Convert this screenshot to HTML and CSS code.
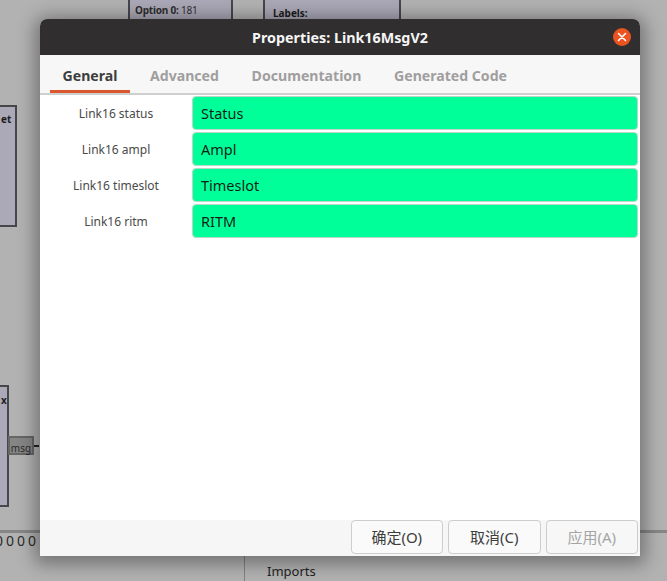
FILE: index.html
```html
<!DOCTYPE html>
<html lang="en">
<head>
<meta charset="utf-8">
<title>Properties: Link16MsgV2</title>
<link rel="stylesheet" href="styles.css">
</head>
<body>
<div class="canvas">
  <div class="node node-a"><span class="opt"><b>Option 0:</b> 181</span></div>
  <div class="node node-b"><b>Labels:</b></div>
  <div class="node node-c"><b>et</b></div>
  <div class="node node-d"><b>x</b></div>
  <div class="port">msg</div>
  <div class="wire"></div>
  <div class="hline"></div>
  <div class="ruler">0000</div>
  <div class="vline"></div>
  <div class="imports">Imports</div>
</div>
<div class="dialog">
  <header class="titlebar">
    <span class="title">Properties: Link16MsgV2</span>
    <span class="close"><svg viewBox="0 0 18 18" width="18" height="18"><path d="M5.5 5.5l7 7M12.5 5.5l-7 7" stroke="#fff" stroke-width="1.6" stroke-linecap="round" fill="none"/></svg></span>
  </header>
  <nav class="tabs">
    <span class="tab active">General</span>
    <span class="tab">Advanced</span>
    <span class="tab">Documentation</span>
    <span class="tab">Generated Code</span>
  </nav>
  <main class="form">
    <div class="row"><label class="label">Link16 status</label><div class="field">Status</div></div>
    <div class="row"><label class="label">Link16 ampl</label><div class="field">Ampl</div></div>
    <div class="row"><label class="label">Link16 timeslot</label><div class="field">Timeslot</div></div>
    <div class="row"><label class="label">Link16 ritm</label><div class="field">RITM</div></div>
  </main>
  <footer class="footer">
    <button class="btn">确定(O)</button>
    <button class="btn">取消(C)</button>
    <button class="btn disabled">应用(A)</button>
  </footer>
</div>
</body>
</html>
```
FILE: styles.css
```css
* { box-sizing: border-box; }
html, body { margin: 0; height: 100%; }
body {
  width: 667px;
  height: 581px;
  overflow: hidden;
  position: relative;
  background: #b2b2b2;
  font-family: "Noto Sans", "Noto Sans CJK SC", sans-serif;
}
.canvas { position: absolute; inset: 0; overflow: hidden; }
.node {
  position: absolute;
  background: #aba8b7;
  border: 2px solid #47474b;
  font-size: 10px;
  color: #1c1c1c;
}
.node b { font-weight: 700; }
.node-a { left: 128px; top: -10px; width: 105px; height: 40px; padding: 11px 0 0 5px; }
.node-a .opt { color: #2e2e2e; letter-spacing: -0.2px; }
.node-b { left: 263px; top: -10px; width: 138px; height: 40px; padding: 14px 0 0 8px; }
.node-c { left: -10px; top: 105px; width: 27px; height: 122px; padding: 5px 0 0 9px; }
.node-d { left: -10px; top: 385px; width: 19px; height: 122px; padding: 6px 0 0 9px; }
.port {
  position: absolute;
  left: 8px; top: 436px;
  width: 26px; height: 19px;
  background: #858585;
  border: 2px solid #666;
  font-size: 10px;
  line-height: 21px;
  text-align: center;
  color: #2a2a2a;
}
.wire { position: absolute; left: 34px; top: 445px; width: 5px; height: 2px; background: #222; }
.hline { position: absolute; left: 0; right: 0; top: 530px; height: 3px; background: #868686; }
.ruler {
  position: absolute;
  left: -5px; top: 533px;
  font-size: 14px;
  line-height: 16px;
  letter-spacing: 3px;
  color: #2a2a2a;
}
.vline { position: absolute; left: 244px; top: 556px; bottom: 0; width: 1px; background: #808080; }
.imports { position: absolute; left: 267px; top: 561.5px; font-size: 13px; line-height: 18px; color: #1e1e1e; }

.dialog {
  position: absolute;
  left: 40px; top: 19px;
  width: 600px; height: 537px;
  display: flex;
  flex-direction: column;
  background: #fff;
  border-radius: 7px 7px 0 0;
  box-shadow: 0 3px 18px 5px rgba(0,0,0,.36);
  overflow: hidden;
}
.titlebar {
  flex: 0 0 36px;
  display: flex;
  align-items: center;
  justify-content: center;
  position: relative;
  background: #302e2e;
  color: #f5f5f5;
  font-size: 14.3px;
  font-weight: 700;
}
.close {
  position: absolute;
  right: 9px; top: 9px;
  width: 18px; height: 18px;
  border-radius: 50%;
  background: #e95420;
  display: flex;
}
.tabs {
  flex: 0 0 40px;
  display: flex;
  align-items: stretch;
  background: #f7f7f7;
  padding-left: 10px;
  border-bottom: 2px solid #cfcfcf;
  font-size: 14.1px;
  font-weight: 700;
}
.tab { padding: 0 12px; margin-right: 8.7px; line-height: 42px; height: 38px; color: #a09e9e; }
.tab.active {
  width: 80px;
  padding: 0;
  text-align: center;
  color: #3d3d3d;
  margin-right: 8px;
  box-shadow: inset 0 -3px 0 #d9582c;
}
.form {
  flex: 1;
  display: flex;
  flex-direction: column;
  gap: 2px;
  padding: 1px 2px 0 2px;
  background: #fff;
}
.row { display: flex; height: 34px; }
.label {
  flex: 0 0 150px;
  padding-right: 2px;
  text-align: center;
  font-size: 12px;
  line-height: 36px;
  color: #4a4a4a;
}
.field {
  flex: 1;
  background: #00ff99;
  border: 1px solid #b9d8c8;
  border-radius: 4px;
  padding-left: 8px;
  font-size: 14.5px;
  line-height: 32px;
  color: #0f1f18;
}
.footer {
  flex: 0 0 36px;
  display: flex;
  justify-content: flex-end;
  align-items: flex-start;
  gap: 5px;
  padding-right: 2px;
  background: #f6f6f6;
}
.btn {
  width: 92.5px;
  height: 34px;
  padding: 0 0 2px;
  background: #fafafa;
  border: 1px solid #cdcdcd;
  border-radius: 4px;
  font-family: inherit;
  font-size: 15px;
  color: #3d3d3d;
}
.btn.disabled { color: #a5a5a5; background: #f7f7f7; }
```
